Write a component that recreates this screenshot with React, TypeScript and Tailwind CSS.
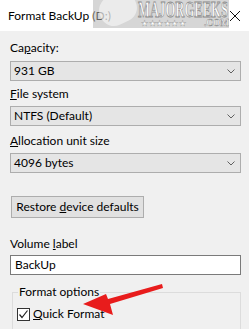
import type { ReactNode } from "react";

function Chevron() {
  return (
    <svg width="8" height="5" viewBox="0 0 8 5" className="shrink-0">
      <path d="M0.5 0.5 L4 4 L7.5 0.5" fill="none" stroke="#606060" strokeWidth="1" />
    </svg>
  );
}

function Label({ children, className = "" }: { children: ReactNode; className?: string }) {
  return <div className={`h-[16px] leading-[16px] text-[12px] text-black ${className}`}>{children}</div>;
}

function Select({ value, className = "" }: { value: string; className?: string }) {
  return (
    <div
      className={`h-[20px] w-[231px] flex items-center justify-between border border-[#adadad] bg-[#e5e5e5] pl-[3px] pr-[5px] text-[12px] leading-[18px] ${className}`}
    >
      <span>{value}</span>
      <Chevron />
    </div>
  );
}

function Watermark() {
  return (
    <div className="absolute left-[93px] top-0 w-[136px] h-[28px] bg-[#b4b4b4]/55 overflow-hidden">
      {/* hand shape */}
      <div className="absolute left-[6px] top-[-6px] w-[38px] h-[30px] rounded-[14px] bg-white/50 rotate-[-25deg]" />
      <div
        className="absolute left-[45px] top-[0px] text-[23px] leading-[19px] font-bold text-white origin-left scale-x-[0.55] whitespace-nowrap"
        style={{ fontFamily: '"Liberation Serif", serif', WebkitTextStroke: "0.8px #8a8a8a" }}
      >
        MAJORGEEKS
      </div>
      <div
        className="absolute left-[48px] top-[18px] text-[8px] leading-[10px] tracking-[0.5px] text-white whitespace-nowrap"
        style={{ WebkitTextStroke: "0.4px #9a9a9a" }}
      >
        ★★★★★★
      </div>
      <div
        className="absolute left-[111px] top-[17px] text-[11px] leading-[11px] font-bold text-white origin-left scale-x-[0.85]"
        style={{ fontFamily: '"Liberation Serif", serif', WebkitTextStroke: "0.5px #8a8a8a" }}
      >
        .COM
      </div>
    </div>
  );
}

function RedArrow() {
  return (
    <svg className="absolute left-0 top-0 pointer-events-none" width="249" height="329" viewBox="0 0 249 329">
      <polygon points="83,304 106,294 108,299 162,284 163,288 110,304 113,315" fill="#e81c1c" />
    </svg>
  );
}

export default function App() {
  return (
    <div
      className="relative w-[249px] h-[329px] overflow-hidden bg-[#f0f0f0] text-black"
      style={{ fontFamily: 'Lato, "Noto Sans", sans-serif' }}
    >
      {/* title bar */}
      <div className="relative h-[31px] bg-white flex items-center justify-between pl-[8px] pr-[9px]">
        <span className="text-[12px] leading-[16px]">Format BackUp (D:)</span>
        <svg width="10" height="10" viewBox="0 0 10 10">
          <path d="M0 0 L10 10 M10 0 L0 10" stroke="#111" strokeWidth="1" />
        </svg>
        <Watermark />
      </div>

      <div className="pl-[10px] pr-[8px]">
        <Label className="mt-[9px]">
          Ca<span className="underline">p</span>acity:
        </Label>
        <Select value="931 GB" className="mt-[5px]" />

        <Label className="mt-[5px]">
          <span className="underline">F</span>ile system
        </Label>
        <Select value="NTFS (Default)" className="mt-[4px]" />

        <Label className="mt-[7px]">
          <span className="underline">A</span>llocation unit size
        </Label>
        <Select value="4096 bytes" className="mt-[4px]" />

        <button
          type="button"
          className="mt-[23px] ml-[1px] h-[22px] w-[133px] border border-[#adadad] bg-[#e1e1e1] text-[12px] leading-[20px] text-center"
        >
          Restore <span className="underline">d</span>evice defaults
        </button>

        <Label className="mt-[18px]">
          Volume <span className="underline">l</span>abel
        </Label>
        <div className="mt-[3px] h-[20px] w-[231px] border border-[#7a7a7a] bg-white pl-[4px] text-[12px] leading-[18px]">
          BackUp
        </div>

        <div className="relative mt-[17px] ml-[2px] w-[229px] h-[60px] border border-[#dcdcdc]">
          <div className="absolute left-[5px] top-[-9px] px-[1px] bg-[#f0f0f0] text-[12px] leading-[16px]">
            Format options
          </div>
          <div className="flex items-center gap-[3px] pl-[4px] pt-[13px]">
            <div className="w-[13px] h-[13px] border border-[#333] bg-white flex items-center justify-center">
              <svg width="11" height="11" viewBox="0 0 11 11">
                <path d="M1.5 5.5 L4 8.5 L9.5 1.5" fill="none" stroke="#222" strokeWidth="1.2" />
              </svg>
            </div>
            <span className="text-[12px] leading-[16px]">
              <span className="underline">Q</span>uick Format
            </span>
          </div>
        </div>
      </div>

      <RedArrow />
    </div>
  );
}
